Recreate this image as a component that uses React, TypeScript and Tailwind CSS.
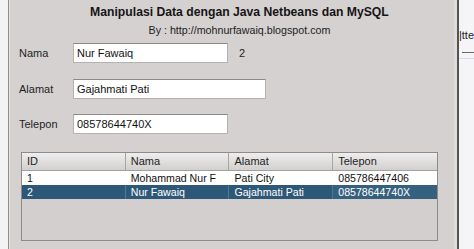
import React from 'react';

const rows = [
  { id: '1', nama: 'Mohammad Nur F', alamat: 'Pati City', telepon: '085786447406' },
  { id: '2', nama: 'Nur Fawaiq', alamat: 'Gajahmati Pati', telepon: '08578644740X' },
];

const columns = ['ID', 'Nama', 'Alamat', 'Telepon'];

const Field: React.FC<{ label: string; value: string; width: string }> = ({ label, value, width }) => (
  <div className="flex items-center h-[20px]">
    <div className="w-[54px] text-[11px] text-[#1e1e1e]">{label}</div>
    <div
      className={`${width} h-[20px] bg-white border border-[#b4b1b1] border-t-[#8c8989] flex items-center px-[3px] text-[11px] text-[#111]`}
    >
      {value}
    </div>
  </div>
);

const App: React.FC = () => {
  return (
    <div
      className="w-[474px] h-[249px] flex overflow-hidden bg-[#f4f4f4]"
      style={{ fontFamily: '"Liberation Sans", Arial, sans-serif' }}
    >
      {/* tepi kiri */}
      <div className="w-[8px] bg-[#f3f3f3]" />
      <div className="w-[1px] bg-[#8f8c8c]" />
      <div className="w-[1px] bg-[#e4e1e1]" />

      {/* panel utama */}
      <div className="w-[445px] bg-[#d5d1d1] flex flex-col">
        <div className="pl-[15px] pt-[5px] text-center">
          <div className="text-[12.2px] leading-[14px] font-bold text-[#151515]">
            Manipulasi Data dengan Java Netbeans dan MySQL
          </div>
          <div className="mt-[5px] text-[10.7px] leading-[13px] text-[#222]">
            By : http://mohnurfawaiq.blogspot.com
          </div>
        </div>

        <div className="pl-[9px] mt-[6px] flex flex-col">
          <div className="flex items-center">
            <Field label="Nama" value="Nur Fawaiq" width="w-[155px]" />
            <span className="ml-[11px] text-[11px] text-[#1e1e1e]">2</span>
          </div>
          <div className="mt-[16px]">
            <Field label="Alamat" value="Gajahmati Pati" width="w-[193px]" />
          </div>
          <div className="mt-[15px]">
            <Field label="Telepon" value="08578644740X" width="w-[155px]" />
          </div>
        </div>

        {/* tabel */}
        <div className="ml-[11px] mt-[18px] w-[417px] h-[89px] border border-[#8f8b8b] bg-[#d3cfcf] flex flex-col">
          <div className="flex h-[18px] bg-gradient-to-b from-[#efeded] to-[#d2cfcf] border-b border-[#a3a0a0]">
            {columns.map((c, i) => (
              <div
                key={c}
                className={`w-[104px] flex items-center pl-[5px] text-[11px] text-[#1e1e1e] ${i < 3 ? 'border-r border-[#a7a4a4]' : ''}`}
              >
                {c}
              </div>
            ))}
          </div>
          {rows.map((r, idx) => {
            const selected = idx === 1;
            return (
              <div
                key={r.id}
                className={`flex h-[14px] ${selected ? 'bg-[#2e5878] text-white' : 'bg-white text-[#111]'}`}
              >
                {[r.id, r.nama, r.alamat, r.telepon].map((v, i) => (
                  <div
                    key={i}
                    className={`w-[104px] flex items-center pl-[5px] text-[10.6px] leading-[14px] ${
                      selected && i < 3 ? 'border-r border-[#4f7797]' : ''
                    } ${selected && i === 3 ? 'bg-[#35617f]' : ''}`}
                  >
                    {v}
                  </div>
                ))}
              </div>
            );
          })}
        </div>
      </div>

      {/* tepi kanan */}
      <div className="w-[3px] bg-[#dedcdc]" />
      <div className="w-[2px] bg-[#57534f]" />
      <div className="flex-1 bg-[#f5f5f7] flex flex-col">
        <div className="mt-[29px] text-[11px] leading-[12px] text-[#222] whitespace-nowrap overflow-hidden">
          |tte
        </div>
        <div className="mt-[11px] ml-[3px] h-[1px] bg-[#6b6b6b]" />
        <div className="mt-[5px] h-[1px] bg-[#d8d8ee]" />
      </div>
    </div>
  );
};

export default App;
